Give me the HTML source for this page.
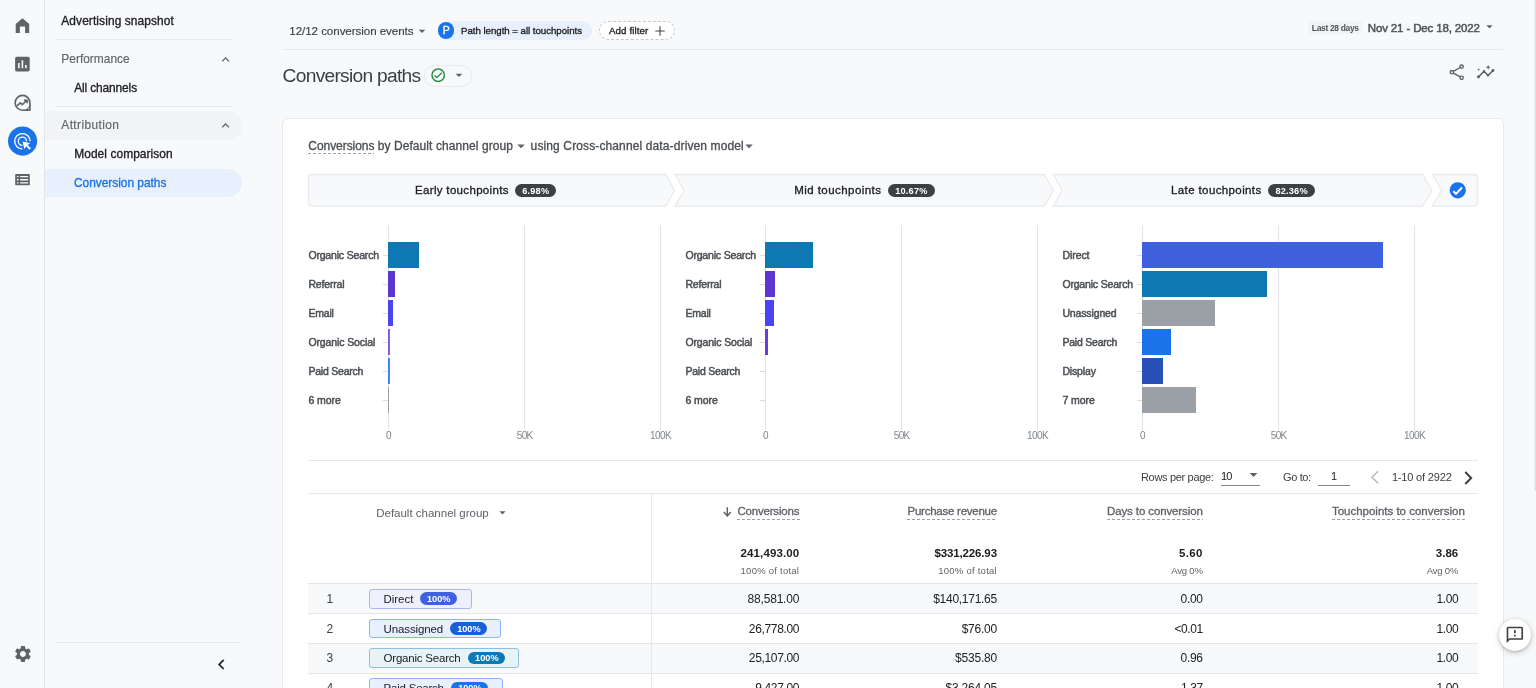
<!DOCTYPE html>
<html lang="en">
<head>
<meta charset="utf-8">
<title>Conversion paths</title>
<style>
*{box-sizing:border-box;margin:0;padding:0}
html,body{width:1536px;height:688px;overflow:hidden;background:#f8f9fa}
body{position:relative;transform:translateZ(0);will-change:transform;font-family:"Liberation Sans",sans-serif;color:#202124}
.a{position:absolute}
.t{position:absolute;white-space:nowrap;line-height:1;font-family:"Liberation Sans",sans-serif}
.t.m{-webkit-text-stroke:0.32px currentColor}
.t.l{-webkit-text-stroke:0.15px currentColor}
.t.mm{-webkit-text-stroke:0.5px currentColor}
.t.b{font-weight:bold}
svg{position:absolute;overflow:visible}
.hl{position:absolute;height:1px;background:#e6e8eb}
.vl{position:absolute;width:1px;background:#e6e8eb}
.bar{position:absolute;height:25.500px}
.badge{position:absolute;border-radius:6.5px}
.chip{position:absolute;border-radius:3px;border:1px solid}
.dash{position:absolute;height:1px;background:repeating-linear-gradient(90deg,#9aa0a6 0,#9aa0a6 3px,transparent 3px,transparent 5px)}
.tick{position:absolute;height:1px;width:5px;background:#dadce0}
.grid{position:absolute;width:1px;background:#e0e2e5;top:226px;height:204px}
</style>
</head>
<body>

<!-- ============ ICON RAIL ============ -->
<div class="vl" style="left:44px;top:0;height:688px;background:#e3e5e8"></div>
<svg style="left:0;top:0" width="60" height="210" viewBox="0 0 60 210">
<!-- home -->
<path fill="#5f6368" d="M22.450 18.200 15.700 23.900V33.100H19.900V26.600H25.100V33.100H29.200V23.900z"/>
<!-- reports -->
<rect x="15.100" y="56.800" width="14.600" height="14.600" rx="1.600" fill="#5f6368"/>
<path fill="#f8f9fa" d="M18.050 62.900h1.600v5.400h-1.600zM21.600 60.300h1.600v8h-1.600zM25.100 64.900h1.600v3.400h-1.600z"/>
<!-- explore -->
<path fill="#5f6368" d="M22.550 110.200A7.400 7.400 0 0 0 29.950 102.800V110.200z"/>
<path fill="none" stroke="#5f6368" stroke-width="1.600" d="M29.950 102.800A7.400 7.400 0 1 0 22.550 110.200H29.950z" stroke-linejoin="round"/>
<circle cx="28.600" cy="108.850" r="0.700" fill="#f8f9fa"/>
<path fill="none" stroke="#5f6368" stroke-width="1.500" stroke-linejoin="round" d="M17.050 105.900 20.250 102.900 22.250 104.600 26.900 100.400M23.900 100.200H27.200V103.300"/>
<!-- advertising (active) -->
<circle cx="22.560" cy="141.050" r="14.600" fill="#1a73e8"/>
<path fill="none" stroke="#fff" stroke-width="1.350" d="M22.400 148.900A7.650 7.650 0 1 1 30.050 141.250M22.400 145.350A4.100 4.100 0 1 1 26.500 141.250"/>
<path fill="#fff" d="M22.500 141.500 30.300 143.300 27.500 145 30.900 148.300 29.500 149.700 26.200 146.300 24.400 149.100z"/>
<!-- configure -->
<rect x="15.200" y="173.900" width="14.600" height="11.300" rx="0.800" fill="#5f6368"/>
<path fill="#f8f9fa" d="M16.900 175.900h1.600v1.400h-1.600zM20.100 175.900h8v1.400h-8zM16.900 179.050h1.600v1.400h-1.600zM20.100 179.050h8v1.400h-8zM16.900 182.200h1.600v1.400h-1.600zM20.100 182.200h8v1.400h-8z"/>
</svg>
<!-- settings -->
<svg style="left:12.500px;top:644.250px" width="19.900" height="19.900" viewBox="0 0 24 24"><path fill="#5f6368" d="M19.14 12.94c.04-.3.06-.61.06-.94 0-.32-.02-.64-.07-.94l2.03-1.58c.18-.14.23-.41.12-.61l-1.92-3.32c-.12-.22-.37-.29-.59-.22l-2.39.96c-.5-.38-1.03-.7-1.62-.94l-.36-2.54c-.04-.24-.24-.41-.48-.41h-3.84c-.24 0-.43.17-.47.41l-.36 2.54c-.59.24-1.13.57-1.62.94l-2.39-.96c-.22-.08-.47 0-.59.22L2.74 8.87c-.12.21-.08.47.12.61l2.03 1.58c-.05.3-.09.63-.09.94s.02.64.07.94l-2.03 1.58c-.18.14-.23.41-.12.61l1.92 3.32c.12.22.37.29.59.22l2.39-.96c.5.38 1.03.7 1.62.94l.36 2.54c.05.24.24.41.48.41h3.84c.24 0 .44-.17.47-.41l.36-2.54c.59-.24 1.13-.56 1.62-.94l2.39.96c.22.08.47 0 .59-.22l1.92-3.32c.12-.22.07-.47-.12-.61l-2.01-1.58zM12 15.6c-1.98 0-3.6-1.62-3.6-3.6s1.620-3.6 3.6-3.6 3.6 1.620 3.6 3.6-1.620 3.6-3.6 3.6z"/></svg>

<!-- ============ NAV PANEL ============ -->
<div class="hl" style="left:55px;top:39px;width:178px"></div>
<div class="hl" style="left:55px;top:106px;width:178px"></div>
<div class="a" style="left:45px;top:110.700px;width:197.100px;height:29px;border-radius:0 14.500px 14.500px 0;background:#f1f3f4"></div>
<div class="a" style="left:45px;top:168.500px;width:197.200px;height:28.900px;border-radius:0 14.450px 14.450px 0;background:#e8f0fe"></div>
<svg style="left:217.800px;top:51.500px" width="15.200" height="15.200" viewBox="0 0 24 24"><path fill="#5f6368" d="M12 8l-6 6 1.41 1.41L12 10.83l4.59 4.58L18 14z"/></svg>
<svg style="left:217.800px;top:117.850px" width="15.200" height="15.200" viewBox="0 0 24 24"><path fill="#5f6368" d="M12 8l-6 6 1.41 1.41L12 10.83l4.59 4.58L18 14z"/></svg>
<div class="hl" style="left:55px;top:642px;width:185px"></div>
<svg style="left:211.260px;top:653.500px" width="20.800" height="20.800" viewBox="0 0 24 24"><path fill="#202124" d="M15.41 7.41L14 6l-6 6 6 6 1.41-1.41L10.83 12z"/></svg>

<!-- ============ TOP BAR ============ -->
<svg style="left:414px;top:22.5px" width="16" height="16" viewBox="0 0 24 24"><path fill="#5f6368" d="M7 10l5 5 5-5z"/></svg>
<div class="a" style="left:437.5px;top:21.2px;width:154.4px;height:18.8px;border-radius:9.4px;background:#e8f0fe"></div>
<div class="a" style="left:437.950px;top:22.300px;width:16.300px;height:16.300px;border-radius:50%;background:#1a73e8"></div>
<span class="t m" style="left:442.700px;top:25px;font-size:10.500px;color:#fff">P</span>
<div class="a" style="left:598.5px;top:21.2px;width:76.6px;height:18.8px;border-radius:9.4px;border:1px dashed #c4c7cc;background:#fff"></div>
<svg style="left:651.600px;top:22.500px" width="16" height="16" viewBox="0 0 24 24"><path fill="#3c4043" d="M19 12.8h-6.2V19h-1.600v-6.2H5v-1.600h6.2V5h1.600v6.2H19z"/></svg>
<div class="hl" style="left:283px;top:49px;width:1220px"></div>
<!-- date -->
<div class="a" style="left:1308.3px;top:21.1px;width:53.7px;height:13.1px;border-radius:2px;background:#f1f3f4"></div>
<svg style="left:1482px;top:18.600px" width="15" height="15" viewBox="0 0 24 24"><path fill="#5f6368" d="M7 10l5 5 5-5z"/></svg>

<!-- title pill -->
<div class="a" style="left:424.400px;top:64.500px;width:47.300px;height:22px;border-radius:11px;border:1px solid #e8eaed;background:#f8f9fa"></div>
<svg style="left:429.7px;top:67.1px" width="16.4" height="16.4" viewBox="0 0 24 24"><path fill="#1e8e3e" d="M12 2C6.48 2 2 6.48 2 12s4.48 10 10 10 10-4.48 10-10S17.52 2 12 2zm0 18c-4.41 0-8-3.59-8-8s3.59-8 8-8 8 3.59 8 8-3.59 8-8 8zm4.59-12.42L10 14.17l-2.59-2.58L6 13l4 4 8-8z"/></svg>
<svg style="left:450.6px;top:67.3px" width="16" height="16" viewBox="0 0 24 24"><path fill="#5f6368" d="M7 10l5 5 5-5z"/></svg>
<!-- share + insights -->
<svg style="left:0;top:0" width="1536" height="100" viewBox="0 0 1536 100">
<g fill="none" stroke="#5f6368" stroke-width="1.400">
<circle cx="1451.900" cy="72.200" r="1.650"/><circle cx="1461.600" cy="66.600" r="1.650"/><circle cx="1461.600" cy="77.800" r="1.650"/>
<path d="M1453.400 71.300 1460.100 67.500M1453.400 73.100 1460.100 76.900"/>
<path d="M1478.400 77 1484 71.200 1488 75.500 1493 70.500" stroke-width="1.600" stroke-linejoin="round"/>
</g>
<g fill="#5f6368">
<circle cx="1478.400" cy="77" r="1.450"/><circle cx="1493" cy="70.500" r="1.450"/><circle cx="1484" cy="71.200" r="1.100"/><circle cx="1488" cy="75.500" r="1.100"/>
<path d="M1488.200 64.900l.7 1.700 1.700.7-1.700.7-.7 1.700-.7-1.700-1.700-.7 1.700-.7z"/>
<path d="M1478.700 67.900l.45 1.050 1.050.45-1.050.45-.45 1.050-.45-1.050-1.050-.45 1.050-.45z"/>
</g>
</svg>

<!-- ============ CARD ============ -->
<div class="a" style="left:282px;top:118px;width:1222px;height:600px;border:1px solid #e8eaed;border-radius:6px;background:#fff"></div>
<div class="dash" style="left:308px;top:153px;width:66px;height:1.400px"></div>
<svg style="left:512.200px;top:136.700px" width="18" height="18" viewBox="0 0 24 24"><path fill="#5f6368" d="M7 10l5 5 5-5z"/></svg>
<svg style="left:740.300px;top:136.650px" width="18" height="18" viewBox="0 0 24 24"><path fill="#5f6368" d="M7 10l5 5 5-5z"/></svg>

<!-- stage chevrons -->
<svg style="left:0;top:0" width="1536" height="688" viewBox="0 0 1536 688" fill="#f8f9fa" stroke="#e8eaed" stroke-width="1.300">
<path d="M311.500 174.500H665.600L674.700 190.500 665.600 206.200H311.500a3 3 0 0 1-3-3V177.500a3 3 0 0 1 3-3z"/>
<path d="M675.100 174.500H1044.300L1053.400 190.500 1044.300 206.200H675.100L684.200 190.500z"/>
<path d="M1053.100 174.500H1422.700L1431.800 190.500 1422.700 206.200H1053.100L1062.200 190.500z"/>
<path d="M1432.500 174.500H1474.500a3 3 0 0 1 3 3V203.200a3 3 0 0 1-3 3H1432.500L1441.600 190.500z"/>
</svg>
<div class="badge" style="left:515.400px;top:183.900px;width:40.900px;height:12.900px;background:#3c4043"></div>
<div class="badge" style="left:888.100px;top:183.900px;width:46.500px;height:12.900px;background:#3c4043"></div>
<div class="badge" style="left:1268.300px;top:183.900px;width:46.500px;height:12.900px;background:#3c4043"></div>
<svg style="left:0;top:0" width="1536" height="688" viewBox="0 0 1536 688"><circle cx="1457.750" cy="190.300" r="8.100" fill="#1a73e8"/><path fill="none" stroke="#fff" stroke-width="1.900" d="M1453.300 191.200 1456 193.800 1462 187.500"/></svg>

<!-- ============ CHARTS ============ -->
<!-- gridlines -->
<div class="grid" style="left:388px"></div><div class="grid" style="left:524px"></div><div class="grid" style="left:660px"></div>
<div class="grid" style="left:765px"></div><div class="grid" style="left:901px"></div><div class="grid" style="left:1037px"></div>
<div class="grid" style="left:1142px"></div><div class="grid" style="left:1278px"></div><div class="grid" style="left:1414px"></div>
<div class="tick" style="left:383px;top:254.6px"></div><div class="tick" style="left:383px;top:283.6px"></div><div class="tick" style="left:383px;top:312.6px"></div><div class="tick" style="left:383px;top:341.6px"></div><div class="tick" style="left:383px;top:370.6px"></div><div class="tick" style="left:383px;top:399.6px"></div><div class="tick" style="left:760px;top:254.6px"></div><div class="tick" style="left:760px;top:283.6px"></div><div class="tick" style="left:760px;top:312.6px"></div><div class="tick" style="left:760px;top:341.6px"></div><div class="tick" style="left:760px;top:370.6px"></div><div class="tick" style="left:760px;top:399.6px"></div><div class="tick" style="left:1137px;top:254.6px"></div><div class="tick" style="left:1137px;top:283.6px"></div><div class="tick" style="left:1137px;top:312.6px"></div><div class="tick" style="left:1137px;top:341.6px"></div><div class="tick" style="left:1137px;top:370.6px"></div><div class="tick" style="left:1137px;top:399.6px"></div>
<!-- early bars -->
<div class="bar" style="left:388px;top:242.200px;width:30.600px;background:#0d78b3"></div>
<div class="bar" style="left:388px;top:271.160px;width:7.300px;background:#5e35d1"></div>
<div class="bar" style="left:388px;top:300.120px;width:4.600px;background:#4a45f0"></div>
<div class="bar" style="left:388px;top:329.080px;width:2px;background:#8a5be0"></div>
<div class="bar" style="left:388px;top:358.040px;width:2px;background:#3b86f0"></div>
<div class="bar" style="left:388px;top:387px;width:1.200px;background:#9aa0a6"></div>
<!-- mid bars -->
<div class="bar" style="left:765px;top:242.200px;width:48px;background:#0d78b3"></div>
<div class="bar" style="left:765px;top:271.160px;width:9.900px;background:#5e35d1"></div>
<div class="bar" style="left:765px;top:300.120px;width:9.300px;background:#4a45f0"></div>
<div class="bar" style="left:765px;top:329.080px;width:2.900px;background:#7038d8"></div>
<!-- late bars -->
<div class="bar" style="left:1142px;top:242.200px;width:241.200px;background:#3f61e0"></div>
<div class="bar" style="left:1142px;top:271.160px;width:124.900px;background:#0d78b3"></div>
<div class="bar" style="left:1142px;top:300.120px;width:73.100px;background:#9aa0a6"></div>
<div class="bar" style="left:1142px;top:329.080px;width:28.600px;background:#1a73e8"></div>
<div class="bar" style="left:1142px;top:358.040px;width:21.300px;background:#2850b8"></div>
<div class="bar" style="left:1142px;top:387px;width:53.700px;background:#9aa0a6"></div>

<!-- ============ TABLE ============ -->
<div class="hl" style="left:308px;top:460px;width:1170px"></div>
<div class="hl" style="left:308px;top:493px;width:1170px"></div>
<!-- zebra rows -->
<div class="a" style="left:308px;top:583px;width:1170px;height:31px;background:#f8f9fa;border-top:1px solid #e3e5e8;border-bottom:1px solid #e3e5e8"></div>
<div class="a" style="left:308px;top:643px;width:1170px;height:31px;background:#f8f9fa;border-top:1px solid #e3e5e8;border-bottom:1px solid #e3e5e8"></div>
<div class="vl" style="left:651px;top:493px;height:200px"></div>

<!-- pagination bits -->
<svg style="left:1243.800px;top:464.900px" width="19" height="19" viewBox="0 0 24 24"><path fill="#5f6368" d="M7 10l5 5 5-5z"/></svg>
<div class="hl" style="left:1220.900px;top:485.400px;width:39.400px;background:#80868b"></div>
<div class="hl" style="left:1318.2px;top:485.400px;width:31.600px;background:#80868b"></div>
<svg style="left:1363.900px;top:466.250px" width="22.500" height="22.500" viewBox="0 0 24 24"><path fill="none" stroke="#b4b8bd" stroke-width="1.600" d="M15 5.500 8.500 12 15 18.500"/></svg>
<svg style="left:1456.900px;top:466.700px" width="22" height="22" viewBox="0 0 24 24"><path fill="none" stroke="#3c4043" stroke-width="2.100" d="M9 5.500 15.500 12 9 18.500"/></svg>

<!-- header bits -->
<svg style="left:495.250px;top:505.200px" width="15" height="15" viewBox="0 0 24 24"><path fill="#5f6368" d="M7 10l5 5 5-5z"/></svg>
<svg style="left:0;top:0" width="1536" height="688" viewBox="0 0 1536 688"><path fill="none" stroke="#5f6368" stroke-width="1.500" d="M727.300 507.200V515.600M723.800 512.100 727.300 515.800 730.800 512.100"/></svg>
<div class="dash" style="left:737px;top:519px;width:63px"></div>
<div class="dash" style="left:907px;top:519px;width:90px"></div>
<div class="dash" style="left:1107px;top:519px;width:96px"></div>
<div class="dash" style="left:1332px;top:519px;width:133px"></div>

<!-- row chips -->
<div class="chip" style="left:369px;top:589px;width:102.500px;height:19.500px;background:#eef1fd;border-color:#aab6f4"></div>
<div class="badge" style="left:419.700px;top:592.200px;width:37.600px;height:12.900px;background:#3f61e0"></div>
<div class="chip" style="left:369px;top:618.800px;width:132.400px;height:19.600px;background:#e8f0fe;border-color:#8ab4f8"></div>
<div class="badge" style="left:450px;top:622.200px;width:37.400px;height:12.900px;background:#1a5fd8"></div>
<div class="chip" style="left:369px;top:648.200px;width:150px;height:19.400px;background:#e8f3f8;border-color:#8cc0dc"></div>
<div class="badge" style="left:467.800px;top:651.600px;width:37.600px;height:12.900px;background:#0d78b3"></div>
<div class="chip" style="left:369px;top:678px;width:133.500px;height:19.600px;background:#e8f0fe;border-color:#8ab4f8"></div>
<div class="badge" style="left:451px;top:681.600px;width:37.400px;height:12.900px;background:#1a73e8"></div>

<!-- feedback fab -->
<div class="a" style="left:1498.800px;top:619.100px;width:32px;height:32px;border-radius:50%;background:#fff;box-shadow:0 1px 3px rgba(60,64,67,.3),0 2px 6px 1px rgba(60,64,67,.15)"></div>
<svg style="left:1504.950px;top:624.650px" width="19.700" height="19.700" viewBox="0 0 24 24"><path fill="#3c4043" d="M20 2H4.010c-1.100 0-2 .9-2 2v18L6 18h14c1.100 0 2-.9 2-2V4c0-1.100-.9-2-2-2zm0 14H5.170L4 17.170V4h16v12zm-9-4h2v2h-2zm0-6h2v4h-2z"/></svg>
<!-- scrollbar hint -->
<div class="a" style="left:1534px;top:0;width:1px;height:491px;background:#f0f1f3"></div><div class="a" style="left:1535px;top:0;width:1px;height:491px;background:#dcdee1"></div>

<span class="t m" style="left:61.30px;top:16px;font-size:11.9px;color:#202124;letter-spacing:0.115px;">Advertising snapshot</span>
<span class="t l" style="left:61.30px;top:54px;font-size:11.9px;color:#5f6368;letter-spacing:0.029px;">Performance</span>
<span class="t m" style="left:74.20px;top:83px;font-size:11.9px;color:#202124;letter-spacing:-0.110px;">All channels</span>
<span class="t l" style="left:61.30px;top:120px;font-size:11.9px;color:#5f6368;letter-spacing:0.414px;">Attribution</span>
<span class="t m" style="left:74.20px;top:149px;font-size:11.9px;color:#202124;letter-spacing:0.090px;">Model comparison</span>
<span class="t m" style="left:74.00px;top:178px;font-size:11.9px;color:#1a73e8;letter-spacing:-0.009px;">Conversion paths</span>
<span class="t l" style="left:289.30px;top:25px;font-size:11.6px;color:#3c4043;letter-spacing:-0.065px;">12/12 conversion events</span>
<span class="t m" style="left:461.00px;top:26px;font-size:9.7px;color:#202124;letter-spacing:-0.034px;">Path length = all touchpoints</span>
<span class="t m" style="left:609.00px;top:26px;font-size:9.7px;color:#202124;letter-spacing:0.117px;">Add filter</span>
<span class="t b" style="left:1311.80px;top:24px;font-size:8.5px;color:#50555a;letter-spacing:-0.344px;">Last 28 days</span>
<span class="t mm" style="left:1367.80px;top:23px;font-size:11.5px;color:#50555a;letter-spacing:-0.147px;">Nov 21 - Dec 18, 2022</span>
<span class="t r" style="left:282.60px;top:66px;font-size:19.2px;color:#3c4043;letter-spacing:-0.721px;">Conversion paths</span>
<span class="t m" style="left:308.30px;top:140px;font-size:12px;color:#4a4e52;letter-spacing:-0.055px;">Conversions</span>
<span class="t m" style="left:377.70px;top:140px;font-size:12px;color:#4a4e52;letter-spacing:0.078px;">by Default channel group</span>
<span class="t m" style="left:530.60px;top:140px;font-size:12px;color:#4a4e52;letter-spacing:0.122px;">using Cross-channel data-driven model</span>
<span class="t m" style="left:415.00px;top:185px;font-size:11.5px;color:#202124;letter-spacing:0.328px;">Early touchpoints</span>
<span class="t m" style="left:794.20px;top:185px;font-size:11.5px;color:#202124;letter-spacing:0.444px;">Mid touchpoints</span>
<span class="t m" style="left:1171.00px;top:185px;font-size:11.5px;color:#202124;letter-spacing:0.387px;">Late touchpoints</span>
<span class="t b" style="left:522.35px;top:187px;font-size:9.2px;color:#ffffff;letter-spacing:0.167px;">6.98%</span>
<span class="t b" style="left:895.20px;top:187px;font-size:9.2px;color:#ffffff;letter-spacing:0.205px;">10.67%</span>
<span class="t b" style="left:1275.40px;top:187px;font-size:9.2px;color:#ffffff;letter-spacing:0.205px;">82.36%</span>
<span class="t mm" style="left:308.40px;top:250px;font-size:10.5px;color:#4d5156;letter-spacing:-0.175px;">Organic Search</span>
<span class="t mm" style="left:308.40px;top:279px;font-size:10.5px;color:#4d5156;letter-spacing:-0.157px;">Referral</span>
<span class="t mm" style="left:308.40px;top:308px;font-size:10.5px;color:#4d5156;letter-spacing:-0.173px;">Email</span>
<span class="t mm" style="left:308.40px;top:337px;font-size:10.5px;color:#4d5156;letter-spacing:-0.106px;">Organic Social</span>
<span class="t mm" style="left:308.40px;top:366px;font-size:10.5px;color:#4d5156;letter-spacing:-0.218px;">Paid Search</span>
<span class="t mm" style="left:308.40px;top:395px;font-size:10.5px;color:#4d5156;letter-spacing:-0.048px;">6 more</span>
<span class="t mm" style="left:685.40px;top:250px;font-size:10.5px;color:#4d5156;letter-spacing:-0.175px;">Organic Search</span>
<span class="t mm" style="left:685.40px;top:279px;font-size:10.5px;color:#4d5156;letter-spacing:-0.157px;">Referral</span>
<span class="t mm" style="left:685.40px;top:308px;font-size:10.5px;color:#4d5156;letter-spacing:-0.173px;">Email</span>
<span class="t mm" style="left:685.40px;top:337px;font-size:10.5px;color:#4d5156;letter-spacing:-0.106px;">Organic Social</span>
<span class="t mm" style="left:685.40px;top:366px;font-size:10.5px;color:#4d5156;letter-spacing:-0.218px;">Paid Search</span>
<span class="t mm" style="left:685.40px;top:395px;font-size:10.5px;color:#4d5156;letter-spacing:-0.048px;">6 more</span>
<span class="t mm" style="left:1062.40px;top:250px;font-size:10.5px;color:#4d5156;letter-spacing:-0.054px;">Direct</span>
<span class="t mm" style="left:1062.40px;top:279px;font-size:10.5px;color:#4d5156;letter-spacing:-0.175px;">Organic Search</span>
<span class="t mm" style="left:1062.40px;top:308px;font-size:10.5px;color:#4d5156;letter-spacing:-0.135px;">Unassigned</span>
<span class="t mm" style="left:1062.40px;top:337px;font-size:10.5px;color:#4d5156;letter-spacing:-0.218px;">Paid Search</span>
<span class="t mm" style="left:1062.40px;top:366px;font-size:10.5px;color:#4d5156;letter-spacing:-0.148px;">Display</span>
<span class="t mm" style="left:1062.40px;top:395px;font-size:10.5px;color:#4d5156;letter-spacing:-0.048px;">7 more</span>
<span class="t r" style="left:386.00px;top:431px;font-size:10px;color:#80868b;letter-spacing:-0.362px;">0</span>
<span class="t r" style="left:516.80px;top:431px;font-size:10px;color:#80868b;letter-spacing:-0.732px;">50K</span>
<span class="t r" style="left:650.10px;top:431px;font-size:10px;color:#80868b;letter-spacing:-0.590px;">100K</span>
<span class="t r" style="left:763.00px;top:431px;font-size:10px;color:#80868b;letter-spacing:-0.362px;">0</span>
<span class="t r" style="left:893.80px;top:431px;font-size:10px;color:#80868b;letter-spacing:-0.732px;">50K</span>
<span class="t r" style="left:1027.10px;top:431px;font-size:10px;color:#80868b;letter-spacing:-0.590px;">100K</span>
<span class="t r" style="left:1140.00px;top:431px;font-size:10px;color:#80868b;letter-spacing:-0.362px;">0</span>
<span class="t r" style="left:1270.80px;top:431px;font-size:10px;color:#80868b;letter-spacing:-0.732px;">50K</span>
<span class="t r" style="left:1404.10px;top:431px;font-size:10px;color:#80868b;letter-spacing:-0.590px;">100K</span>
<span class="t r" style="left:1141.00px;top:472px;font-size:11px;color:#3c4043;letter-spacing:-0.325px;">Rows per page:</span>
<span class="t r" style="left:1220.90px;top:471px;font-size:11px;color:#202124;letter-spacing:-0.725px;">10</span>
<span class="t r" style="left:1283.00px;top:472px;font-size:11px;color:#3c4043;letter-spacing:-0.361px;">Go to:</span>
<span class="t r" style="left:1330.95px;top:471px;font-size:11px;color:#202124;letter-spacing:-1.625px;">1</span>
<span class="t r" style="left:1391.90px;top:472px;font-size:11px;color:#3c4043;letter-spacing:-0.173px;">1-10 of 2922</span>
<span class="t r" style="left:376.20px;top:508px;font-size:11.5px;color:#5f6368;letter-spacing:-0.001px;">Default channel group</span>
<span class="t m" style="left:737.50px;top:506px;font-size:11.5px;color:#5f6368;letter-spacing:-0.202px;">Conversions</span>
<span class="t m" style="left:907.50px;top:506px;font-size:11.5px;color:#5f6368;letter-spacing:-0.246px;">Purchase revenue</span>
<span class="t m" style="left:1107.00px;top:506px;font-size:11.5px;color:#5f6368;letter-spacing:-0.116px;">Days to conversion</span>
<span class="t m" style="left:1331.90px;top:506px;font-size:11.5px;color:#5f6368;letter-spacing:-0.003px;">Touchpoints to conversion</span>
<span class="t b" style="left:740.60px;top:548px;font-size:11.5px;color:#202124;letter-spacing:0.104px;">241,493.00</span>
<span class="t b" style="left:934.40px;top:548px;font-size:11.5px;color:#202124;letter-spacing:-0.132px;">$331,226.93</span>
<span class="t b" style="left:1179.10px;top:548px;font-size:11.5px;color:#202124;letter-spacing:0.302px;">5.60</span>
<span class="t b" style="left:1435.80px;top:548px;font-size:11.5px;color:#202124;letter-spacing:0.002px;">3.86</span>
<span class="t r" style="left:740.60px;top:566px;font-size:9.5px;color:#5f6368;letter-spacing:0.241px;">100% of total</span>
<span class="t r" style="left:938.30px;top:566px;font-size:9.5px;color:#5f6368;letter-spacing:0.241px;">100% of total</span>
<span class="t r" style="left:1171.20px;top:566px;font-size:9.5px;color:#5f6368;letter-spacing:-0.180px;">Avg 0%</span>
<span class="t r" style="left:1426.70px;top:566px;font-size:9.5px;color:#5f6368;letter-spacing:-0.180px;">Avg 0%</span>
<span class="t r" style="left:326.50px;top:593px;font-size:12px;color:#3c4043;letter-spacing:-0.688px;">1</span>
<span class="t r" style="left:383.60px;top:594px;font-size:11.5px;color:#202124;letter-spacing:-0.055px;">Direct</span>
<span class="t r" style="left:747.60px;top:593px;font-size:12px;color:#202124;letter-spacing:-0.199px;">88,581.00</span>
<span class="t r" style="left:933.20px;top:593px;font-size:12px;color:#202124;letter-spacing:-0.276px;">$140,171.65</span>
<span class="t r" style="left:1180.50px;top:593px;font-size:12px;color:#202124;letter-spacing:-0.290px;">0.00</span>
<span class="t r" style="left:1436.60px;top:593px;font-size:12px;color:#202124;letter-spacing:-0.440px;">1.00</span>
<span class="t r" style="left:326.50px;top:623px;font-size:12px;color:#3c4043;letter-spacing:-0.688px;">2</span>
<span class="t r" style="left:383.60px;top:624px;font-size:11.5px;color:#202124;letter-spacing:-0.133px;">Unassigned</span>
<span class="t r" style="left:748.80px;top:623px;font-size:12px;color:#202124;letter-spacing:-0.332px;">26,778.00</span>
<span class="t r" style="left:961.70px;top:623px;font-size:12px;color:#202124;letter-spacing:-0.251px;">$76.00</span>
<span class="t r" style="left:1174.50px;top:623px;font-size:12px;color:#202124;letter-spacing:-0.435px;">&lt;0.01</span>
<span class="t r" style="left:1436.60px;top:623px;font-size:12px;color:#202124;letter-spacing:-0.440px;">1.00</span>
<span class="t r" style="left:326.50px;top:652px;font-size:12px;color:#3c4043;letter-spacing:-0.688px;">3</span>
<span class="t r" style="left:383.60px;top:653px;font-size:11.5px;color:#202124;letter-spacing:-0.215px;">Organic Search</span>
<span class="t r" style="left:748.80px;top:652px;font-size:12px;color:#202124;letter-spacing:-0.332px;">25,107.00</span>
<span class="t r" style="left:955.10px;top:652px;font-size:12px;color:#202124;letter-spacing:-0.227px;">$535.80</span>
<span class="t r" style="left:1180.50px;top:652px;font-size:12px;color:#202124;letter-spacing:-0.290px;">0.96</span>
<span class="t r" style="left:1436.60px;top:652px;font-size:12px;color:#202124;letter-spacing:-0.440px;">1.00</span>
<span class="t r" style="left:326.50px;top:682px;font-size:12px;color:#3c4043;letter-spacing:-0.688px;">4</span>
<span class="t r" style="left:383.60px;top:683px;font-size:11.5px;color:#202124;letter-spacing:-0.223px;">Paid Search</span>
<span class="t r" style="left:755.20px;top:682px;font-size:12px;color:#202124;letter-spacing:-0.340px;">9,427.00</span>
<span class="t r" style="left:945.50px;top:682px;font-size:12px;color:#202124;letter-spacing:-0.221px;">$3,264.05</span>
<span class="t r" style="left:1181.10px;top:682px;font-size:12px;color:#202124;letter-spacing:-0.440px;">1.37</span>
<span class="t r" style="left:1436.60px;top:682px;font-size:12px;color:#202124;letter-spacing:-0.440px;">1.00</span>
<span class="t b" style="left:426.95px;top:595px;font-size:9.2px;color:#ffffff;letter-spacing:0.000px;">100%</span>
<span class="t b" style="left:457.15px;top:625px;font-size:9.2px;color:#ffffff;letter-spacing:0.000px;">100%</span>
<span class="t b" style="left:475.05px;top:654px;font-size:9.2px;color:#ffffff;letter-spacing:0.000px;">100%</span>
<span class="t b" style="left:458.15px;top:684px;font-size:9.2px;color:#ffffff;letter-spacing:0.000px;">100%</span>
</body>
</html>
